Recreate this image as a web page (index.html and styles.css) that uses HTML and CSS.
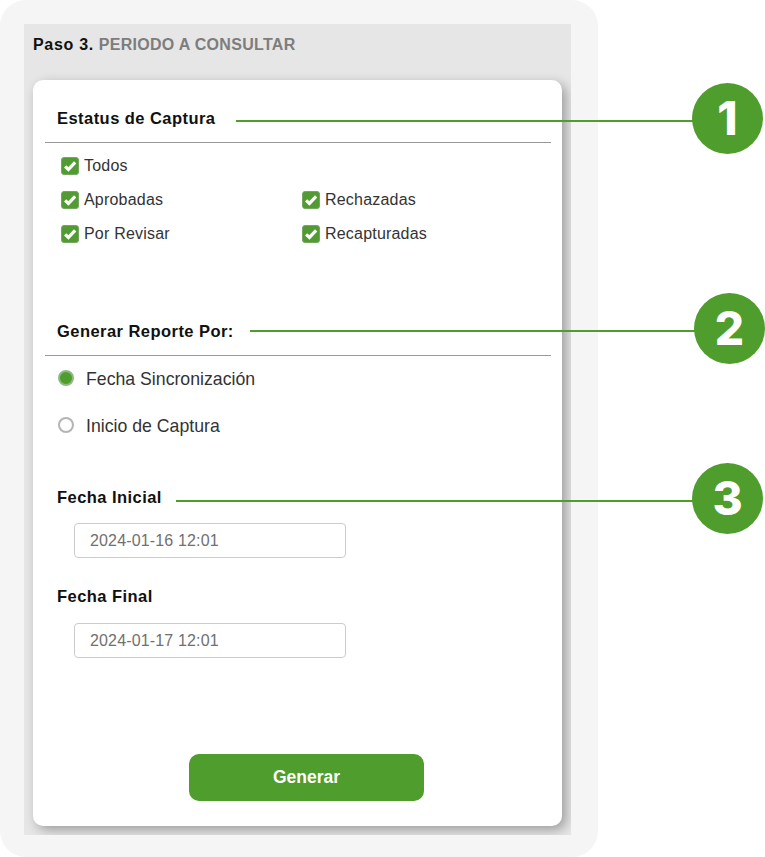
FILE: index.html
```html
<!DOCTYPE html>
<html lang="es">
<head>
  <meta charset="UTF-8" />
  <meta name="viewport" content="width=device-width, initial-scale=1.0" />
  <title>Paso 3. Periodo a consultar</title>
  <link rel="stylesheet" href="styles.css">
</head>
<body>
  <div class="frame">
    <div class="panel">
      <h1 class="step"><span class="step-num">Paso 3.</span> PERIODO A CONSULTAR</h1>
      <form class="card">
        <h2 class="section-title title-status">Estatus de Captura</h2>
        <div class="checks">
          <label class="check check-all"><span class="box"><svg viewBox="0 0 18 18"><path d="M3.5 9.5l3.7 3.4L14.8 5" /></svg></span>Todos</label>
          <label class="check"><span class="box"><svg viewBox="0 0 18 18"><path d="M3.5 9.5l3.7 3.4L14.8 5" /></svg></span>Aprobadas</label>
          <label class="check"><span class="box"><svg viewBox="0 0 18 18"><path d="M3.5 9.5l3.7 3.4L14.8 5" /></svg></span>Rechazadas</label>
          <label class="check"><span class="box"><svg viewBox="0 0 18 18"><path d="M3.5 9.5l3.7 3.4L14.8 5" /></svg></span>Por Revisar</label>
          <label class="check"><span class="box"><svg viewBox="0 0 18 18"><path d="M3.5 9.5l3.7 3.4L14.8 5" /></svg></span>Recapturadas</label>
        </div>

        <h2 class="section-title title-report">Generar Reporte Por:</h2>
        <div class="radios">
          <label class="radio"><span class="dot dot-on"></span>Fecha Sincronización</label>
          <label class="radio"><span class="dot"></span>Inicio de Captura</label>
        </div>

        <h3 class="field-title title-start">Fecha Inicial</h3>
        <input class="date" type="text" value="2024-01-16 12:01" />
        <h3 class="field-title title-end">Fecha Final</h3>
        <input class="date" type="text" value="2024-01-17 12:01" />

        <div class="actions">
          <button class="btn-generate" type="button">Generar</button>
        </div>
      </form>
    </div>
  </div>

  <div class="leader leader-1"></div>
  <div class="leader leader-2"></div>
  <div class="leader leader-3"></div>
  <div class="badge badge-1">1</div>
  <div class="badge badge-2">2</div>
  <div class="badge badge-3">3</div>
</body>
</html>
```

FILE: styles.css
```css
* {
  box-sizing: border-box;
}
body {
  margin: 0;
  width: 765px;
  height: 857px;
  position: relative;
  overflow: hidden;
  background: #ffffff;
  font-family: "Liberation Sans", Arial, sans-serif;
  color: #222222;
}
.frame {
  width: 598px;
  height: 857px;
  padding: 24px 27px 22px 24px;
  background: #f5f5f5;
  border-radius: 26px;
}
.panel {
  height: 100%;
  padding: 0 9px;
  background: #e6e6e6;
  overflow: hidden;
}
.step {
  margin: 0;
  height: 56px;
  padding-top: 12px;
  font-size: 16px;
  line-height: 17px;
  font-weight: bold;
  letter-spacing: 0.3px;
  color: #7d7d7d;
}
.step-num {
  letter-spacing: 0.7px;
  color: #111111;
}
.card {
  height: 746px;
  padding: 0 11px 0 12px;
  background: #ffffff;
  border-radius: 10px;
  box-shadow: 4px 4px 12px rgba(0, 0, 0, 0.32);
}
.section-title {
  margin: 0;
  padding: 0 0 0 12px;
  font-size: 16.5px;
  line-height: 18px;
  letter-spacing: 0.45px;
  color: #111111;
  border-bottom: 1px solid #999999;
}
.title-status {
  padding-top: 29px;
  height: 63px;
}
.title-report {
  margin-top: 60px;
  height: 35px;
  padding-top: 1px;
}
.checks {
  display: grid;
  grid-template-columns: 241px 1fr;
  grid-auto-rows: 34px;
  padding: 6px 0 0 16px;
  height: 118px;
}
.check {
  display: flex;
  align-items: center;
  font-size: 16px;
  letter-spacing: 0.2px;
  color: #333333;
}
.check-all {
  grid-column: span 2;
}
.box {
  width: 18px;
  height: 18px;
  margin-right: 5px;
  background: #529b32;
  border: 1px solid #74a860;
  border-radius: 3px;
}
.box svg {
  display: block;
  width: 16px;
  height: 16px;
}
.box path {
  fill: none;
  stroke: #ffffff;
  stroke-width: 3.6;
}
.radios {
  display: flex;
  flex-direction: column;
  padding: 0 0 0 13px;
}
.radio {
  display: flex;
  align-items: center;
  height: 47px;
  font-size: 17.7px;
  color: #333333;
}
.dot {
  width: 16px;
  height: 16px;
  margin: -3px 12px 0 0;
  border: 2px solid #b4b4b4;
  border-radius: 50%;
  background: #ffffff;
}
.dot-on {
  background: #4f9d2c;
  border-color: #8fb884;
}
.field-title {
  margin: 0;
  padding-left: 12px;
  font-size: 16.5px;
  line-height: 18px;
  letter-spacing: 0.45px;
  color: #111111;
}
.title-start {
  margin-top: 38px;
}
.title-end {
  margin-top: 29px;
}
.date {
  display: block;
  width: 272px;
  height: 35px;
  margin: 17px 0 0 29px;
  padding: 0 15px;
  border: 1px solid #cccccc;
  border-radius: 4px;
  background: #ffffff;
  font-family: "Liberation Sans", Arial, sans-serif;
  font-size: 16px;
  letter-spacing: 0.15px;
  color: #707070;
}
.title-end + .date {
  margin-top: 18px;
}
.actions {
  display: flex;
  justify-content: center;
  margin-top: 96px;
  padding-left: 17px;
}
.btn-generate {
  width: 235px;
  height: 47px;
  border: none;
  border-radius: 10px;
  background: #4f9d2c;
  color: #ffffff;
  font-family: "Liberation Sans", Arial, sans-serif;
  font-size: 17.5px;
  font-weight: bold;
}
.leader {
  position: absolute;
  height: 2px;
  background: #4f9d2c;
}
.leader-1 {
  left: 236px;
  top: 120px;
  width: 460px;
}
.leader-2 {
  left: 250px;
  top: 330px;
  width: 448px;
}
.leader-3 {
  left: 176px;
  top: 500px;
  width: 520px;
}
.badge {
  position: absolute;
  width: 71px;
  height: 71px;
  border-radius: 50%;
  background: #4f9d2c;
  color: #ffffff;
  font-family: Inter, "Liberation Sans", sans-serif;
  font-size: 46px;
  font-weight: 800;
  line-height: 71px;
  text-align: center;
}
.badge-1 {
  left: 692px;
  top: 83px;
}
.badge-2 {
  left: 694px;
  top: 293px;
}
.badge-3 {
  left: 692px;
  top: 463px;
}
```
